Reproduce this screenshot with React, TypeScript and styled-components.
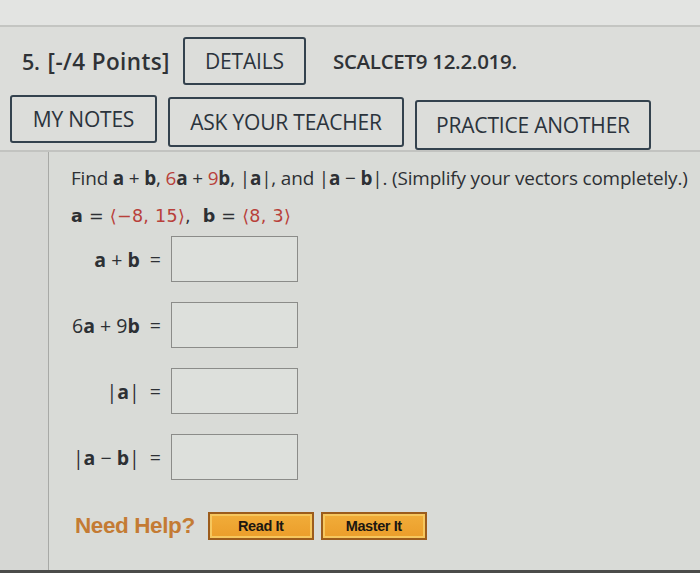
import React from "react";
import styled, { createGlobalStyle } from "styled-components";

const Global = createGlobalStyle`
  html, body { margin: 0; padding: 0; }
  body { background: #d8d9d6; font-family: "Open Sans", "Liberation Sans", sans-serif; color: #2e3338; }
`;

const Page = styled.div`
  width: 700px;
  height: 573px;
  display: flex;
  flex-direction: column;
  overflow: hidden;
  background: #d8d9d6;
  border-bottom: 3px solid #4b4c4a;
  box-sizing: border-box;
`;

const TopStrip = styled.div`
  height: 25px;
  flex: none;
  background: #e3e4e2;
  border-bottom: 2px solid #c4c5c2;
`;

const Header = styled.div`
  flex: none;
  background: #dcddda;
  border-bottom: 2px solid #c2c3c0;
  padding: 10px 0 0 10px;
  height: 125px;
  box-sizing: border-box;
`;

const TitleRow = styled.div`
  display: flex;
  align-items: center;
  height: 48px;
  padding-left: 12px;
`;

const Title = styled.span<{ $gap?: number; $lead?: number; $size?: number; $track?: number }>`
  font-size: ${(p) => p.$size ?? 20.5}px;
  font-weight: 600;
  color: #2f3236;
  letter-spacing: ${(p) => p.$track ?? -0.3}px;
  margin-left: ${(p) => p.$lead ?? 0}px;
  margin-right: ${(p) => p.$gap ?? 0}px;
  white-space: pre;
`;

const OutlineButton = styled.button<{ $w: number; $h?: number; $drop?: number }>`
  width: ${(p) => p.$w}px;
  height: ${(p) => p.$h ?? 48}px;
  margin-top: ${(p) => p.$drop ?? 0}px;
  box-sizing: border-box;
  border: 2px solid #34424e;
  border-radius: 3px;
  background: transparent;
  font-family: "Open Sans", "Liberation Sans", sans-serif;
  font-size: 21px;
  color: #2b333c;
  letter-spacing: -0.2px;
  padding: 0;
  flex: none;
  white-space: nowrap;
`;

const ButtonRow = styled.div`
  display: flex;
  align-items: flex-start;
  gap: 11px;
  margin-top: 10px;
`;

const Body = styled.div`
  flex: 1;
  display: flex;
  min-height: 0;
`;

const Gutter = styled.div`
  width: 48px;
  flex: none;
  border-right: 1px solid #a8a9a6;
  background: #d6d7d4;
`;

const Content = styled.div`
  flex: 1;
  padding: 14px 0 0 22px;
  background: #d9dbd7;
`;

const Question = styled.div`
  font-family: "Open Sans", "Liberation Sans", sans-serif;
  font-size: 18.9px;
  line-height: 24px;
  color: #2d3034;
  white-space: nowrap;
  letter-spacing: -0.15px;
`;

const Red = styled.span`
  color: #b8403a;
`;

const B = styled.b`
  font-weight: 700;
`;

const Vectors = styled.div`
  margin-top: 14px;
  font-family: "DejaVu Sans", "Open Sans", sans-serif;
  font-size: 17.5px;
  line-height: 24px;
  color: #2d3034;
  white-space: pre;
  letter-spacing: 0.3px;
`;

const Answers = styled.div`
  margin-top: 8px;
  display: grid;
  grid-template-columns: 90px 127px;
  column-gap: 10px;
  row-gap: 20px;
  align-items: center;
`;

const Label = styled.div`
  text-align: right;
  font-family: "Open Sans", "Liberation Sans", sans-serif;
  font-size: 19.5px;
  color: #2d3034;
  white-space: pre;
  margin-left: -30px;
`;

const AnswerBox = styled.input`
  width: 127px;
  height: 46px;
  box-sizing: border-box;
  border: 1px solid #8b8c89;
  background: #dde0dc;
  outline: none;
`;

const HelpRow = styled.div`
  display: flex;
  align-items: center;
  margin-top: 32px;
  padding-left: 4px;
`;

const NeedHelp = styled.span`
  font-family: "Liberation Sans", Arial, sans-serif;
  font-weight: 700;
  font-size: 22.5px;
  color: #c47b34;
  letter-spacing: -0.4px;
  margin-right: 13px;
`;

const HelpButton = styled.button`
  width: 106px;
  height: 28px;
  box-sizing: border-box;
  border: 2px solid #9c5c1c;
  box-shadow: inset 0 0 0 2px #f6c75e;
  background: linear-gradient(#f1ad3a, #eb9d2a);
  font-family: "Liberation Sans", Arial, sans-serif;
  font-weight: 700;
  font-size: 14.5px;
  color: #1c1711;
  letter-spacing: -0.4px;
  margin-right: 7px;
  padding: 0;
`;

const rows: { label: React.ReactNode }[] = [
  { label: <><B>a</B> + <B>b</B>  =</> },
  { label: <>6<B>a</B> + 9<B>b</B>  =</> },
  { label: <>|<B>a</B>|  =</> },
  { label: <>|<B>a</B> − <B>b</B>|  =</> },
];

export default function App() {
  return (
    <>
      <Global />
      <Page>
        <TopStrip />
        <Header>
          <TitleRow>
            <Title $gap={8} $size={21.5}>5.</Title>
            <Title $gap={13} $size={22.5} $track={0.4}>[-/4 Points]</Title>
            <OutlineButton $w={123}>DETAILS</OutlineButton>
            <Title $lead={27}>SCALCET9 12.2.019.</Title>
          </TitleRow>
          <ButtonRow>
            <OutlineButton $w={147}>MY NOTES</OutlineButton>
            <OutlineButton $w={236} $h={50} $drop={2}>ASK YOUR TEACHER</OutlineButton>
            <OutlineButton $w={236} $h={50} $drop={5}>PRACTICE ANOTHER</OutlineButton>
          </ButtonRow>
        </Header>
        <Body>
          <Gutter />
          <Content>
            <Question>
              Find <B>a</B> + <B>b</B>, <Red>6</Red><B>a</B> + <Red>9</Red><B>b</B>, |<B>a</B>|, and |<B>a</B> − <B>b</B>|. (Simplify your vectors completely.)
            </Question>
            <Vectors>
              <B>a</B> = <Red>⟨−8, 15⟩</Red>,  <B>b</B> = <Red>⟨8, 3⟩</Red>
            </Vectors>
            <Answers>
              {rows.map((r, i) => (
                <React.Fragment key={i}>
                  <Label>{r.label}</Label>
                  <AnswerBox type="text" />
                </React.Fragment>
              ))}
            </Answers>
            <HelpRow>
              <NeedHelp>Need Help?</NeedHelp>
              <HelpButton>Read It</HelpButton>
              <HelpButton>Master It</HelpButton>
            </HelpRow>
          </Content>
        </Body>
      </Page>
    </>
  );
}
